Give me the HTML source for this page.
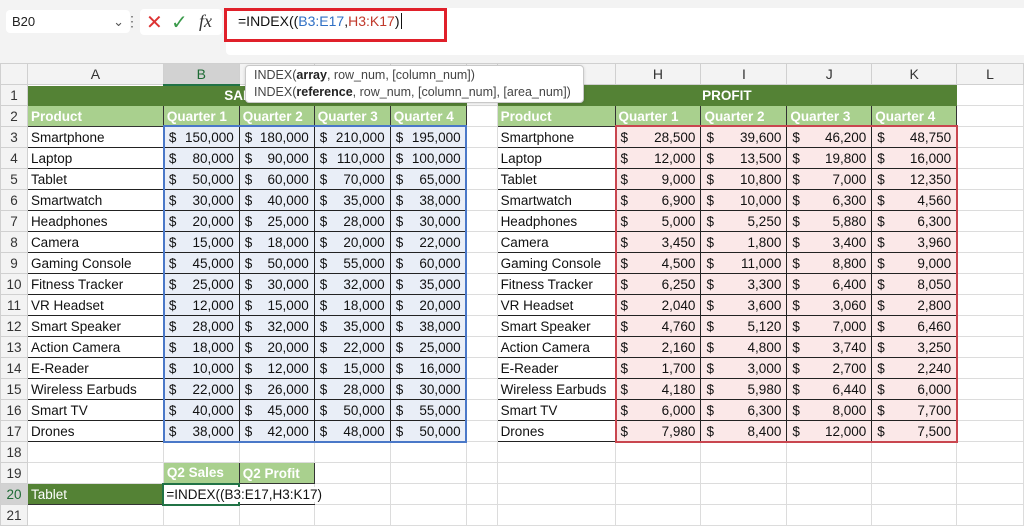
<!DOCTYPE html>
<html><head><meta charset="utf-8">
<style>
*{box-sizing:border-box;margin:0;padding:0}
body{width:1024px;height:527px;overflow:hidden;background:#fff;font-family:"Liberation Sans",Arial,sans-serif;position:relative}
.top{position:absolute;left:0;top:0;width:1024px;height:63px;background:#f3f3f3}
.nb{position:absolute;left:6px;top:10px;width:124px;height:23px;background:#fff;border-radius:4px;font-size:13px;padding:4px 6px;color:#222}
.fx{position:absolute;left:140px;top:9px;width:82px;height:26px;background:#fff;border-radius:4px}
.fbar{position:absolute;left:226px;top:8px;width:798px;height:47px;background:#fff;border-radius:4px 0 0 4px}
.redbox{position:absolute;left:224px;top:8px;width:223px;height:34px;border:3px solid #e0202a}
.ftxt{position:absolute;left:238px;top:13px;font-size:14px;color:#111}
table{position:absolute;left:0;top:63px;border-collapse:collapse;table-layout:fixed;font-size:13.5px}
td{height:21px;border:1px solid #dcdcdc;white-space:nowrap;overflow:hidden;padding:0 3px;color:#111}
tr.h td{background:#f3f3f3;text-align:center;color:#333;font-size:14px;border-color:#d0d0d0}
td.r{background:#f3f3f3;text-align:center;color:#333;border-color:#d0d0d0;padding:0}
td.dg{background:#548235;color:#fff;font-weight:bold;text-align:center;border-color:#548235}
td.lg{background:#a9d08e;color:#fff;font-weight:bold;border:1px solid #333}
td.p{border:1px solid #222}
td.b{background:#e9eef7;border:1px solid #222}
td.k{background:#fbe8e8;border:1px solid #222}
td.b span,td.k span{float:left}
td.b,td.k{text-align:right;padding:0 5px}
.ov{position:absolute;pointer-events:none}
</style></head><body>
<div class="top">
<div class="nb">B20<span style="float:right;color:#555">&#8964;</span></div>
<div style="position:absolute;left:125px;top:13px;color:#666;font-size:14px">&#8942;</div>
<div class="fx"><span style="position:absolute;left:6px;top:1px;color:#d33;font-size:20px">&#10005;</span><span style="position:absolute;left:31px;top:1px;color:#3a9a4a;font-size:20px">&#10003;</span><span style="position:absolute;left:59px;top:2px;font-family:'Liberation Serif',serif;font-style:italic;font-size:18px;color:#333">fx</span></div>
<div class="fbar"></div>
<div class="redbox"></div>
<div class="ftxt">=INDEX((<span style="color:#2f6fc4">B3:E17</span>,<span style="color:#c0392b">H3:K17</span>)<span style="display:inline-block;width:1px;height:16px;background:#111;vertical-align:-3px;margin-left:1px"></span></div>
</div>
<table>
<colgroup><col style="width:27px"><col style="width:136px"><col style="width:76px"><col style="width:75px"><col style="width:76px"><col style="width:76px"><col style="width:31px"><col style="width:118px"><col style="width:86px"><col style="width:86px"><col style="width:85px"><col style="width:85px"><col style="width:67px"></colgroup>
<tr class="h"><td></td><td>A</td><td style="background:#d2d2d2;color:#1e6b35;border-bottom:2px solid #217346">B</td><td>C</td><td>D</td><td>E</td><td>F</td><td>G</td><td>H</td><td>I</td><td>J</td><td>K</td><td>L</td></tr>
<tr><td class="r">1</td><td class="dg" colspan="5">SALES</td><td></td><td class="dg" colspan="5">PROFIT</td><td></td></tr>
<tr><td class="r">2</td><td class="lg">Product</td><td class="lg">Quarter 1</td><td class="lg">Quarter 2</td><td class="lg">Quarter 3</td><td class="lg">Quarter 4</td><td></td><td class="lg">Product</td><td class="lg">Quarter 1</td><td class="lg">Quarter 2</td><td class="lg">Quarter 3</td><td class="lg">Quarter 4</td><td></td></tr>
<tr><td class="r">3</td><td class="p">Smartphone</td><td class="b"><span>$</span>150,000</td><td class="b"><span>$</span>180,000</td><td class="b"><span>$</span>210,000</td><td class="b"><span>$</span>195,000</td><td></td><td class="p">Smartphone</td><td class="k"><span>$</span>28,500</td><td class="k"><span>$</span>39,600</td><td class="k"><span>$</span>46,200</td><td class="k"><span>$</span>48,750</td><td></td></tr>
<tr><td class="r">4</td><td class="p">Laptop</td><td class="b"><span>$</span>80,000</td><td class="b"><span>$</span>90,000</td><td class="b"><span>$</span>110,000</td><td class="b"><span>$</span>100,000</td><td></td><td class="p">Laptop</td><td class="k"><span>$</span>12,000</td><td class="k"><span>$</span>13,500</td><td class="k"><span>$</span>19,800</td><td class="k"><span>$</span>16,000</td><td></td></tr>
<tr><td class="r">5</td><td class="p">Tablet</td><td class="b"><span>$</span>50,000</td><td class="b"><span>$</span>60,000</td><td class="b"><span>$</span>70,000</td><td class="b"><span>$</span>65,000</td><td></td><td class="p">Tablet</td><td class="k"><span>$</span>9,000</td><td class="k"><span>$</span>10,800</td><td class="k"><span>$</span>7,000</td><td class="k"><span>$</span>12,350</td><td></td></tr>
<tr><td class="r">6</td><td class="p">Smartwatch</td><td class="b"><span>$</span>30,000</td><td class="b"><span>$</span>40,000</td><td class="b"><span>$</span>35,000</td><td class="b"><span>$</span>38,000</td><td></td><td class="p">Smartwatch</td><td class="k"><span>$</span>6,900</td><td class="k"><span>$</span>10,000</td><td class="k"><span>$</span>6,300</td><td class="k"><span>$</span>4,560</td><td></td></tr>
<tr><td class="r">7</td><td class="p">Headphones</td><td class="b"><span>$</span>20,000</td><td class="b"><span>$</span>25,000</td><td class="b"><span>$</span>28,000</td><td class="b"><span>$</span>30,000</td><td></td><td class="p">Headphones</td><td class="k"><span>$</span>5,000</td><td class="k"><span>$</span>5,250</td><td class="k"><span>$</span>5,880</td><td class="k"><span>$</span>6,300</td><td></td></tr>
<tr><td class="r">8</td><td class="p">Camera</td><td class="b"><span>$</span>15,000</td><td class="b"><span>$</span>18,000</td><td class="b"><span>$</span>20,000</td><td class="b"><span>$</span>22,000</td><td></td><td class="p">Camera</td><td class="k"><span>$</span>3,450</td><td class="k"><span>$</span>1,800</td><td class="k"><span>$</span>3,400</td><td class="k"><span>$</span>3,960</td><td></td></tr>
<tr><td class="r">9</td><td class="p">Gaming Console</td><td class="b"><span>$</span>45,000</td><td class="b"><span>$</span>50,000</td><td class="b"><span>$</span>55,000</td><td class="b"><span>$</span>60,000</td><td></td><td class="p">Gaming Console</td><td class="k"><span>$</span>4,500</td><td class="k"><span>$</span>11,000</td><td class="k"><span>$</span>8,800</td><td class="k"><span>$</span>9,000</td><td></td></tr>
<tr><td class="r">10</td><td class="p">Fitness Tracker</td><td class="b"><span>$</span>25,000</td><td class="b"><span>$</span>30,000</td><td class="b"><span>$</span>32,000</td><td class="b"><span>$</span>35,000</td><td></td><td class="p">Fitness Tracker</td><td class="k"><span>$</span>6,250</td><td class="k"><span>$</span>3,300</td><td class="k"><span>$</span>6,400</td><td class="k"><span>$</span>8,050</td><td></td></tr>
<tr><td class="r">11</td><td class="p">VR Headset</td><td class="b"><span>$</span>12,000</td><td class="b"><span>$</span>15,000</td><td class="b"><span>$</span>18,000</td><td class="b"><span>$</span>20,000</td><td></td><td class="p">VR Headset</td><td class="k"><span>$</span>2,040</td><td class="k"><span>$</span>3,600</td><td class="k"><span>$</span>3,060</td><td class="k"><span>$</span>2,800</td><td></td></tr>
<tr><td class="r">12</td><td class="p">Smart Speaker</td><td class="b"><span>$</span>28,000</td><td class="b"><span>$</span>32,000</td><td class="b"><span>$</span>35,000</td><td class="b"><span>$</span>38,000</td><td></td><td class="p">Smart Speaker</td><td class="k"><span>$</span>4,760</td><td class="k"><span>$</span>5,120</td><td class="k"><span>$</span>7,000</td><td class="k"><span>$</span>6,460</td><td></td></tr>
<tr><td class="r">13</td><td class="p">Action Camera</td><td class="b"><span>$</span>18,000</td><td class="b"><span>$</span>20,000</td><td class="b"><span>$</span>22,000</td><td class="b"><span>$</span>25,000</td><td></td><td class="p">Action Camera</td><td class="k"><span>$</span>2,160</td><td class="k"><span>$</span>4,800</td><td class="k"><span>$</span>3,740</td><td class="k"><span>$</span>3,250</td><td></td></tr>
<tr><td class="r">14</td><td class="p">E-Reader</td><td class="b"><span>$</span>10,000</td><td class="b"><span>$</span>12,000</td><td class="b"><span>$</span>15,000</td><td class="b"><span>$</span>16,000</td><td></td><td class="p">E-Reader</td><td class="k"><span>$</span>1,700</td><td class="k"><span>$</span>3,000</td><td class="k"><span>$</span>2,700</td><td class="k"><span>$</span>2,240</td><td></td></tr>
<tr><td class="r">15</td><td class="p">Wireless Earbuds</td><td class="b"><span>$</span>22,000</td><td class="b"><span>$</span>26,000</td><td class="b"><span>$</span>28,000</td><td class="b"><span>$</span>30,000</td><td></td><td class="p">Wireless Earbuds</td><td class="k"><span>$</span>4,180</td><td class="k"><span>$</span>5,980</td><td class="k"><span>$</span>6,440</td><td class="k"><span>$</span>6,000</td><td></td></tr>
<tr><td class="r">16</td><td class="p">Smart TV</td><td class="b"><span>$</span>40,000</td><td class="b"><span>$</span>45,000</td><td class="b"><span>$</span>50,000</td><td class="b"><span>$</span>55,000</td><td></td><td class="p">Smart TV</td><td class="k"><span>$</span>6,000</td><td class="k"><span>$</span>6,300</td><td class="k"><span>$</span>8,000</td><td class="k"><span>$</span>7,700</td><td></td></tr>
<tr><td class="r">17</td><td class="p">Drones</td><td class="b"><span>$</span>38,000</td><td class="b"><span>$</span>42,000</td><td class="b"><span>$</span>48,000</td><td class="b"><span>$</span>50,000</td><td></td><td class="p">Drones</td><td class="k"><span>$</span>7,980</td><td class="k"><span>$</span>8,400</td><td class="k"><span>$</span>12,000</td><td class="k"><span>$</span>7,500</td><td></td></tr>
<tr><td class="r">18</td><td></td><td></td><td></td><td></td><td></td><td></td><td></td><td></td><td></td><td></td><td></td><td></td></tr>
<tr><td class="r">19</td><td></td><td class="lg">Q2 Sales</td><td class="lg">Q2 Profit</td><td></td><td></td><td></td><td></td><td></td><td></td><td></td><td></td><td></td></tr>
<tr><td class="r" style="background:#d2d2d2;color:#1e6b35">20</td><td class="dg" style="text-align:left;font-weight:normal;border-color:#333">Tablet</td><td style="overflow:visible;border:2px solid #217346;position:relative"><span style="position:absolute;left:2px;top:2px;background:#fff">=INDEX((B3:E17,H3:K17)</span></td><td style="border-bottom:1px solid #222"></td><td></td><td></td><td></td><td></td><td></td><td></td><td></td><td></td><td></td></tr>
<tr><td class="r">21</td><td></td><td></td><td></td><td></td><td></td><td></td><td></td><td></td><td></td><td></td><td></td><td></td></tr>
</table>
<div class="ov" style="left:163px;top:125px;width:304px;height:318px;border:2px solid #4a78c8"></div>
<div class="ov" style="left:615px;top:125px;width:343px;height:318px;border:2px solid #c9464f"></div>
<div class="ov" style="left:245px;top:65px;width:339px;height:38px;background:#fff;border:1px solid #c8c8c8;border-radius:4px;box-shadow:0 1px 3px rgba(0,0,0,.15);font-size:12.5px;color:#444;padding:1px 8px;line-height:17px">INDEX(<b style="color:#222">array</b>, row_num, [column_num])<br>INDEX(<b style="color:#222">reference</b>, row_num, [column_num], [area_num])</div>
</body></html>
